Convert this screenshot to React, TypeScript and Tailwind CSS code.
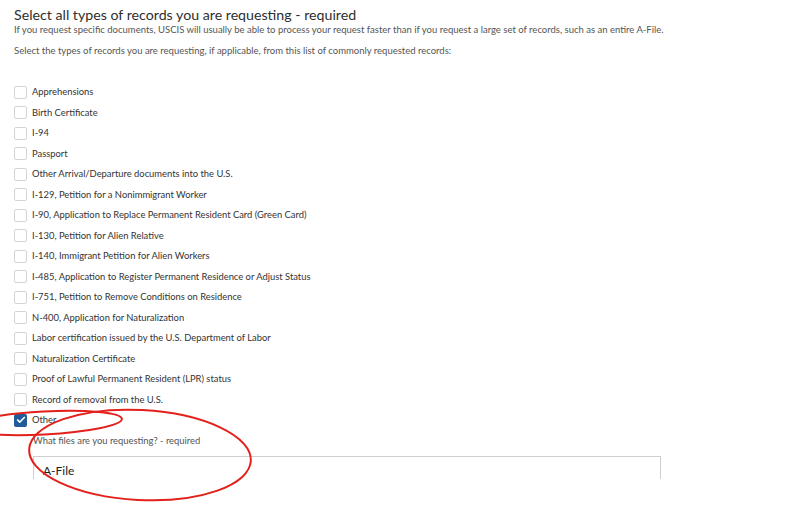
import { Check } from 'lucide-react';

const records = [
  'Apprehensions',
  'Birth Certificate',
  'I-94',
  'Passport',
  'Other Arrival/Departure documents into the U.S.',
  'I-129, Petition for a Nonimmigrant Worker',
  'I-90, Application to Replace Permanent Resident Card (Green Card)',
  'I-130, Petition for Alien Relative',
  'I-140, Immigrant Petition for Alien Workers',
  'I-485, Application to Register Permanent Residence or Adjust Status',
  'I-751, Petition to Remove Conditions on Residence',
  'N-400, Application for Naturalization',
  'Labor certification issued by the U.S. Department of Labor',
  'Naturalization Certificate',
  'Proof of Lawful Permanent Resident (LPR) status',
  'Record of removal from the U.S.',
];

function Box({ checked }: { checked?: boolean }) {
  if (checked) {
    return (
      <span className="flex h-[13px] w-[13px] items-center justify-center rounded-[2px] bg-[#1f5c99]">
        <Check className="h-[10px] w-[10px] text-white" strokeWidth={4} />
      </span>
    );
  }
  return <span className="h-[13px] w-[13px] rounded-[2px] border border-[#d4d4d4] bg-white" />;
}

export default function App() {
  return (
    <div className="relative h-[523px] w-[800px] overflow-hidden bg-white pl-[14px] pt-[6px] font-['Lato',sans-serif] text-[#333]">
      <h2 className="text-[14.2px] leading-[18px] text-[#2e2e2e]">
        Select all types of records you are requesting - required
      </h2>
      <p className="text-[9.5px] leading-[12px] text-[#555]">
        If you request specific documents, USCIS will usually be able to process your request faster than if you request a large set of records, such as an entire A-File.
      </p>
      <p className="mt-[9px] text-[9.5px] leading-[12px] text-[#555]">
        Select the types of records you are requesting, if applicable, from this list of commonly requested records:
      </p>

      <div className="mt-[25px] flex flex-col">
        {records.map((r) => (
          <div key={r} className="flex h-[20.5px] items-center gap-[5px] text-[9.4px] text-[#333]">
            <Box />
            <span>{r}</span>
          </div>
        ))}
        <div className="flex h-[20.5px] items-center gap-[5px] text-[9.4px] text-[#333]">
          <Box checked />
          <span>Other</span>
        </div>
      </div>

      <div className="pl-[19px]">
        <p className="mt-[4px] text-[9.4px] leading-[12px] text-[#555]">What files are you requesting? - required</p>
        <div className="mt-[9px] h-[23px] w-[628px] border-x border-t border-[#cfcfcf] pl-[9px] pt-[6px] text-[12px] leading-[15px] text-[#222]">
          A-File
        </div>
      </div>

      <svg className="pointer-events-none absolute left-0 top-0" width="800" height="523">
        <ellipse cx="44" cy="423" rx="78" ry="11.5" transform="rotate(-3 44 423)" fill="none" stroke="#e3201b" strokeWidth="2" />
        <ellipse cx="140" cy="455" rx="111" ry="45" transform="rotate(3 140 455)" fill="none" stroke="#e3201b" strokeWidth="2" />
      </svg>
    </div>
  );
}
